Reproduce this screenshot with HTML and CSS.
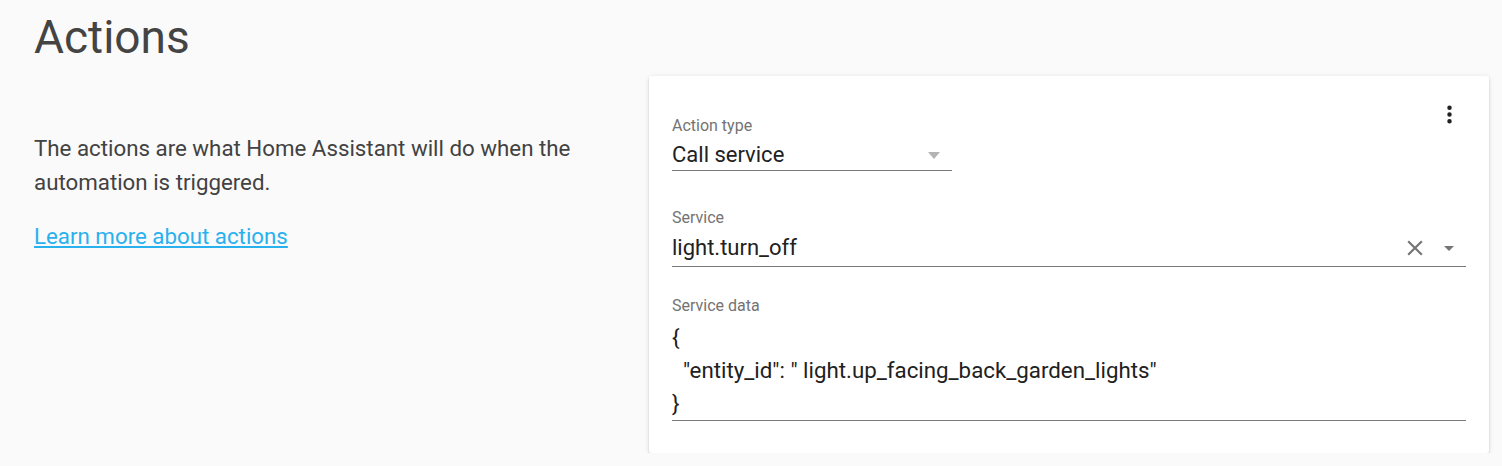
FILE: index.html
```html
<!DOCTYPE html>
<html lang="en">
<head>
  <meta charset="UTF-8">
  <title>Actions</title>
  <link rel="stylesheet" href="styles.css">
</head>
<body>

  <h1 class="header">Actions</h1>

  <div class="section">
    <div class="intro">
      <p>The actions are what Home Assistant will do when the automation is triggered.</p>
      <a href="#" class="learn">Learn more about actions</a>
    </div>

    <div class="card">
      <div class="card-top">
        <div class="field field-type">
          <div class="label">Action type</div>
          <div class="value">
            <span>Call service</span>
            <svg class="arrow arrow-light" viewBox="0 0 12 7"><path d="M0,0H12L6,7Z"/></svg>
          </div>
        </div>
        <button class="menu">
          <svg viewBox="0 0 24 24"><path d="M12,16A2,2 0 0,1 14,18A2,2 0 0,1 12,20A2,2 0 0,1 10,18A2,2 0 0,1 12,16M12,10A2,2 0 0,1 14,12A2,2 0 0,1 12,14A2,2 0 0,1 10,12A2,2 0 0,1 12,10M12,4A2,2 0 0,1 14,6A2,2 0 0,1 12,8A2,2 0 0,1 10,6A2,2 0 0,1 12,4Z"/></svg>
        </button>
      </div>

      <div class="field field-service">
        <div class="label">Service</div>
        <div class="value">
          <span>light.turn_off</span>
          <svg class="clear" viewBox="0 0 24 24"><path d="M19,6.41L17.59,5L12,10.59L6.41,5L5,6.41L10.59,12L5,17.59L6.41,19L12,13.41L17.59,19L19,17.59L13.41,12L19,6.41Z"/></svg>
          <svg class="drop" viewBox="0 0 24 24"><path d="M7,10L12,15L17,10H7Z"/></svg>
        </div>
      </div>

      <div class="field field-data">
        <div class="label">Service data</div>
        <div class="code">{
  "entity_id": " light.up_facing_back_garden_lights"
}</div>
      </div>
    </div>
  </div>

</body>
</html>
```

FILE: styles.css
```css
body {
  margin: 0;
  background: #fafafa;
  font-family: Roboto, "Noto Sans", sans-serif;
  color: #212121;
}
.header {
  margin: 10px 0 12px 34px;
  font-size: 46px;
  line-height: 54px;
  font-weight: 400;
  color: #444;
}
.section {
  display: flex;
  padding: 0 13px 0 34px;
}
.intro {
  width: 580px;
  margin-right: 35px;
  padding-top: 55px;
  font-size: 22.3px;
  line-height: 34px;
  color: #424242;
}
.intro p {
  margin: 0 0 20px;
}
.learn {
  color: #29b1ee;
}
.card {
  flex: 1;
  background: white;
  border-radius: 2px;
  padding: 0 23px 32px;
  box-shadow: 0 2px 2px rgba(0,0,0,.14), 0 1px 5px rgba(0,0,0,.12), 0 3px 1px -2px rgba(0,0,0,.2);
}
.card-top {
  display: flex;
  justify-content: space-between;
  align-items: flex-start;
}
.menu {
  border: none;
  background: none;
  padding: 0;
  margin: 25px 3px 0 0;
  width: 27px;
  height: 27px;
}
.menu svg {
  width: 27px;
  height: 27px;
  fill: #212121;
  display: block;
}
.label {
  font-size: 16px;
  line-height: 20px;
  color: #737373;
}
.value {
  display: flex;
  align-items: center;
  font-size: 22px;
  line-height: 30px;
  border-bottom: 1px solid #7a7a7a;
}
.value span {
  flex: 1;
}
.field-type {
  width: 280px;
  margin-top: 40px;
}
.field-type .label {
  margin-bottom: 4px;
}
.arrow {
  width: 12px;
  height: 7px;
  margin-right: 12px;
}
.arrow-light {
  fill: #b4b4b4;
}
.field-service {
  margin-top: 37px;
}
.field-service .label {
  margin-bottom: 5px;
}
.field-service .value {
  padding-bottom: 3px;
}
.clear {
  width: 26px;
  height: 26px;
  fill: #757575;
  margin-right: 9px;
}
.drop {
  width: 24px;
  height: 24px;
  fill: #757575;
  margin-right: 5px;
}
.field-data {
  margin-top: 29px;
}
.code {
  margin-top: 5px;
  font-size: 22.3px;
  line-height: 33px;
  white-space: pre;
  border-bottom: 1px solid #7a7a7a;
}
```
